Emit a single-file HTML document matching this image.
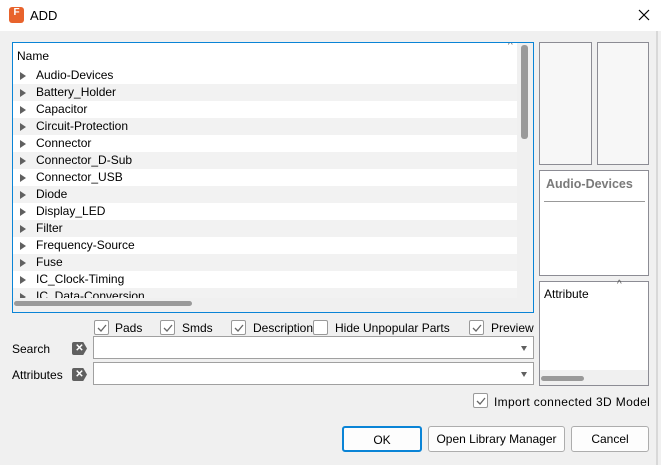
<!DOCTYPE html><html><head><style>
*{box-sizing:border-box;margin:0;padding:0}
body{width:661px;height:465px;background:#f0f0f0;font-family:"Liberation Sans",sans-serif;font-size:12px;color:#000;position:relative;overflow:hidden}
.a{position:absolute}
.title{left:0;top:0;width:661px;height:31px;background:#fff}
.list{left:12px;top:42px;width:522px;height:271px;border:1px solid #0a84d6;background:#fff;overflow:hidden}
.row{position:absolute;left:0;width:505px;height:17px;line-height:17px;padding-left:23px}
.row.g{background:#f2f2f2}
.tri{position:absolute;left:7px;top:5px;width:0;height:0;border-left:6px solid #606060;border-top:4px solid transparent;border-bottom:4px solid transparent}
.box{border:1px solid #8c8c94;background:#f7f7f7}
.cb{width:15px;height:15px;border:1px solid #999;background:#fff;border-radius:2px}
.cb svg{position:absolute;left:2px;top:2px}
.combo{height:23px;border:1px solid #a0a0a0;background:#fff}
.combo:after{content:"";position:absolute;right:6px;top:9px;border-top:5px solid #606060;border-left:3px solid transparent;border-right:3px solid transparent}
.btn{height:26px;border:1px solid #adadad;background:#fdfdfd;border-radius:3px;text-align:center;line-height:24px}
.x{width:15px;height:13px;background:#606060;border-radius:2px 0 0 2px;color:#fff;font-size:10px;line-height:13px;text-align:center;font-weight:bold;clip-path:polygon(0 0,75% 0,100% 50%,75% 100%,0 100%)}
</style></head><body>
<div class="a title"></div>
<div class="a" style="left:9px;top:7px;width:15px;height:16px;background:#e8632c;border-radius:3px;color:#fff;font-weight:bold;font-size:10px;text-align:center;line-height:12px">F</div>
<div class="a" style="left:30px;top:8px;font-size:13px">ADD</div>
<svg class="a" style="left:638px;top:9px" width="12" height="12"><path d="M1 1L11 11M11 1L1 11" stroke="#000" stroke-width="1.2"/></svg>
<div class="a" style="left:656px;top:31px;width:2px;height:434px;background:#d8d8d8"></div>
<div class="a list">
<div class="a" style="left:4px;top:6px">Name</div>
<div class="row" style="top:24px"><i class="tri"></i>Audio-Devices</div>
<div class="row g" style="top:41px"><i class="tri"></i>Battery_Holder</div>
<div class="row" style="top:58px"><i class="tri"></i>Capacitor</div>
<div class="row g" style="top:75px"><i class="tri"></i>Circuit-Protection</div>
<div class="row" style="top:92px"><i class="tri"></i>Connector</div>
<div class="row g" style="top:109px"><i class="tri"></i>Connector_D-Sub</div>
<div class="row" style="top:126px"><i class="tri"></i>Connector_USB</div>
<div class="row g" style="top:143px"><i class="tri"></i>Diode</div>
<div class="row" style="top:160px"><i class="tri"></i>Display_LED</div>
<div class="row g" style="top:177px"><i class="tri"></i>Filter</div>
<div class="row" style="top:194px"><i class="tri"></i>Frequency-Source</div>
<div class="row g" style="top:211px"><i class="tri"></i>Fuse</div>
<div class="row" style="top:228px"><i class="tri"></i>IC_Clock-Timing</div>
<div class="row g" style="top:245px"><i class="tri"></i>IC_Data-Conversion</div>
<div class="a" style="left:0;top:255px;width:520px;height:15px;background:#f0f0f0"></div>
<div class="a" style="left:1px;top:258px;width:178px;height:5px;background:#9a9a9a;border-radius:3px"></div>
<div class="a" style="left:504px;top:0;width:16px;height:256px;background:#f0f0f0"></div>
<div class="a" style="left:508px;top:2px;width:7px;height:94px;background:#9a9a9a;border-radius:3px"></div>
<div class="a" style="left:495px;top:-3px;font-size:10px;color:#555">^</div>
</div>
<div class="a box" style="left:539px;top:42px;width:53px;height:123px"></div>
<div class="a box" style="left:597px;top:42px;width:52px;height:123px"></div>
<div class="a box" style="left:539px;top:170px;width:110px;height:106px;background:#fff"></div>
<div class="a" style="left:546px;top:177px;font-weight:bold;color:#7a7a7a;font-size:12.5px">Audio-Devices</div>
<div class="a" style="left:544px;top:201px;width:101px;height:1px;background:#999"></div>
<div class="a box" style="left:539px;top:281px;width:110px;height:105px;background:#fff"></div>
<div class="a" style="left:544px;top:287px">Attribute</div>
<div class="a" style="left:617px;top:279px;font-size:10px;color:#555">^</div>
<div class="a" style="left:540px;top:370px;width:108px;height:15px;background:#f0f0f0"></div>
<div class="a" style="left:541px;top:376px;width:43px;height:5px;background:#9a9a9a;border-radius:3px"></div>

<div class="a cb" style="left:94px;top:320px"><svg width="10" height="10"><path d="M1 5L4 8L9 2" stroke="#666" fill="none" stroke-width="1.3"/></svg></div>
<div class="a" style="left:115px;top:321px">Pads</div>
<div class="a cb" style="left:160px;top:320px"><svg width="10" height="10"><path d="M1 5L4 8L9 2" stroke="#666" fill="none" stroke-width="1.3"/></svg></div>
<div class="a" style="left:182px;top:321px">Smds</div>
<div class="a cb" style="left:231px;top:320px"><svg width="10" height="10"><path d="M1 5L4 8L9 2" stroke="#666" fill="none" stroke-width="1.3"/></svg></div>
<div class="a" style="left:253px;top:321px">Description</div>
<div class="a cb" style="left:313px;top:320px"></div>
<div class="a" style="left:335px;top:321px">Hide Unpopular Parts</div>
<div class="a cb" style="left:469px;top:320px"><svg width="10" height="10"><path d="M1 5L4 8L9 2" stroke="#666" fill="none" stroke-width="1.3"/></svg></div>
<div class="a" style="left:491px;top:321px">Preview</div>

<div class="a" style="left:12px;top:342px">Search</div>
<div class="a x" style="left:72px;top:342px">✕</div>
<div class="a combo" style="left:93px;top:336px;width:441px"></div>
<div class="a" style="left:12px;top:368px">Attributes</div>
<div class="a x" style="left:72px;top:368px">✕</div>
<div class="a combo" style="left:93px;top:362px;width:441px"></div>

<div class="a cb" style="left:473px;top:393px"><svg width="10" height="10"><path d="M1 5L4 8L9 2" stroke="#666" fill="none" stroke-width="1.3"/></svg></div>
<div class="a" style="left:494px;top:395px;letter-spacing:0.35px">Import connected 3D Model</div>

<div class="a btn" style="left:342px;top:426px;width:80px;border:2px solid #0a84d6">OK</div>
<div class="a btn" style="left:428px;top:426px;width:137px">Open Library Manager</div>
<div class="a btn" style="left:571px;top:426px;width:78px">Cancel</div>
</body></html>
